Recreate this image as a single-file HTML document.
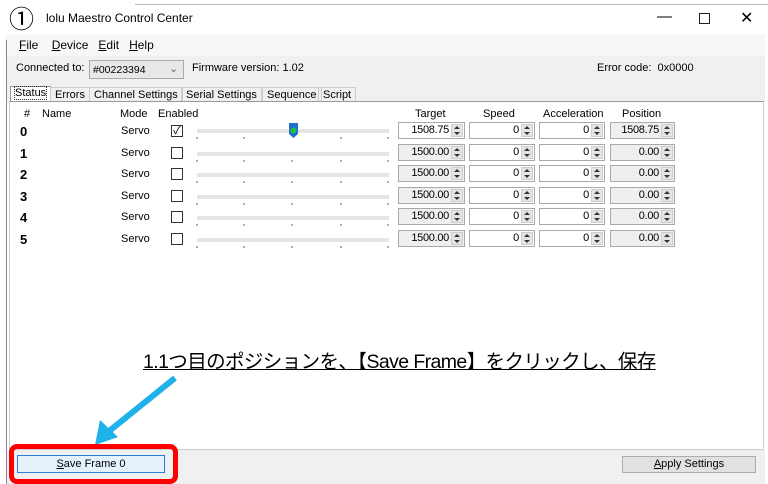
<!DOCTYPE html>
<html><head><meta charset="utf-8"><style>
*{margin:0;padding:0;box-sizing:border-box}
body{width:768px;height:484px;overflow:hidden;background:#fff;font-family:"Liberation Sans","Noto Sans CJK JP",sans-serif;font-size:11px;color:#000;position:relative}
.a{position:absolute;white-space:nowrap}
.sp{position:absolute;height:17px;border:1px solid #a9a9a9;background:#fff;font-size:11px;text-align:right;padding-right:15px;line-height:15px;letter-spacing:-0.3px}
.sp.g{background:#efefef}
.sp i{position:absolute;right:1px;top:1px;width:12px;height:13px;background:#e4e4e4;border:1px solid #cfcfcf}
.sp i:before{content:"";position:absolute;left:2px;top:1px;border:3px solid transparent;border-bottom:3px solid #333;border-top:0}
.sp i:after{content:"";position:absolute;left:2px;top:7px;border:3px solid transparent;border-top:3px solid #333;border-bottom:0}
.tr{position:absolute;left:197px;width:192px;height:4px;background:#e5e5e5}
.cb{position:absolute;left:171px;width:12px;height:12px;border:1px solid #333;background:#fff}
.n{position:absolute;left:20px;font-weight:bold;font-size:13px}
.sv{position:absolute;left:121px}
</style></head><body>
<div class="a" style="left:135px;top:4px;width:633px;height:1px;background:#bbb"></div>
<div class="a" style="left:9px;top:5px;font-size:25px;line-height:30px">①</div>
<div class="a" style="left:46px;top:11px;font-size:12px">lolu Maestro Control Center</div>
<div class="a" style="left:657px;top:8px;font-size:15px">—</div>
<div class="a" style="left:699px;top:13px;width:11px;height:11px;border:1px solid #222"></div>
<div class="a" style="left:740px;top:8px;font-size:16px">✕</div>
<div class="a" style="left:5px;top:34px;width:760px;height:22px;background:#f7f7f7"></div>
<div class="a" style="left:6px;top:40px;width:1px;height:444px;background:#888"></div>
<div class="a" style="left:19px;top:38px;font-size:12px"><u>F</u>ile &nbsp;&nbsp; <u>D</u>evice &nbsp;&nbsp;<u>E</u>dit &nbsp;&nbsp;<u>H</u>elp</div>
<div class="a" style="left:7px;top:56px;width:758px;height:46px;background:#f0f0f0"></div>
<div class="a" style="left:16px;top:62px">Connected to:</div>
<div class="a" style="left:89px;top:60px;width:95px;height:19px;border:1px solid #aaa;background:#e8e8e8;padding:3px 3px;font-size:10.5px">#00223394<span style="position:absolute;right:5px;top:2px;color:#666">⌄</span></div>
<div class="a" style="left:192px;top:62px">Firmware version: 1.02</div>
<div class="a" style="left:597px;top:62px">Error code: &nbsp;0x0000</div>
<div class="a" style="left:10px;top:86px;height:15px;border:1px solid #999;border-bottom:0;background:#fff;padding:0 3px;line-height:13px"><span style="border:1px dotted #333">Status</span></div>
<div class="a" style="left:50px;top:87px;height:14px;border:1px solid #ccc;border-bottom:0;padding:0 4px;line-height:14px">Errors</div>
<div class="a" style="left:89px;top:87px;height:14px;border:1px solid #ccc;border-bottom:0;padding:0 4px;line-height:14px">Channel Settings</div>
<div class="a" style="left:181px;top:87px;height:14px;border:1px solid #ccc;border-bottom:0;padding:0 4px;line-height:14px">Serial Settings</div>
<div class="a" style="left:262px;top:87px;height:14px;border:1px solid #ccc;border-bottom:0;padding:0 4px;line-height:14px">Sequence</div>
<div class="a" style="left:318px;top:87px;height:14px;border:1px solid #ccc;border-bottom:0;padding:0 4px;line-height:14px">Script</div>
<div class="a" style="left:9px;top:101px;width:755px;height:349px;border:1px solid #ccc;border-top-color:#999;background:#fff"></div>
<div class="a" style="left:24px;top:108px">#</div><div class="a" style="left:42px;top:108px">Name</div>
<div class="a" style="left:120px;top:108px">Mode</div><div class="a" style="left:158px;top:108px">Enabled</div>
<div class="a" style="left:415px;top:108px">Target</div><div class="a" style="left:483px;top:108px">Speed</div>
<div class="a" style="left:543px;top:108px">Acceleration</div><div class="a" style="left:622px;top:108px">Position</div>

<div class="n" style="top:124px">0</div><div class="sv a" style="top:125px">Servo</div><div class="cb" style="top:125px;font-size:11px;line-height:10px;text-align:center">✓</div>
<div class="tr" style="top:129px"></div>
<div class="sp" style="left:398px;top:122px;width:67px">1508.75<i></i></div><div class="sp" style="left:469px;top:122px;width:66px">0<i></i></div><div class="sp" style="left:539px;top:122px;width:66px">0<i></i></div><div class="sp g" style="left:610px;top:122px;width:65px">1508.75<i></i></div>
<div class="n" style="top:146px">1</div><div class="sv a" style="top:147px">Servo</div><div class="cb" style="top:147px"></div>
<div class="tr" style="top:152px"></div>
<div class="sp g" style="left:398px;top:144px;width:67px">1500.00<i></i></div><div class="sp" style="left:469px;top:144px;width:66px">0<i></i></div><div class="sp" style="left:539px;top:144px;width:66px">0<i></i></div><div class="sp g" style="left:610px;top:144px;width:65px">0.00<i></i></div>
<div class="n" style="top:167px">2</div><div class="sv a" style="top:168px">Servo</div><div class="cb" style="top:168px"></div>
<div class="tr" style="top:173px"></div>
<div class="sp g" style="left:398px;top:165px;width:67px">1500.00<i></i></div><div class="sp" style="left:469px;top:165px;width:66px">0<i></i></div><div class="sp" style="left:539px;top:165px;width:66px">0<i></i></div><div class="sp g" style="left:610px;top:165px;width:65px">0.00<i></i></div>
<div class="n" style="top:189px">3</div><div class="sv a" style="top:190px">Servo</div><div class="cb" style="top:190px"></div>
<div class="tr" style="top:195px"></div>
<div class="sp g" style="left:398px;top:187px;width:67px">1500.00<i></i></div><div class="sp" style="left:469px;top:187px;width:66px">0<i></i></div><div class="sp" style="left:539px;top:187px;width:66px">0<i></i></div><div class="sp g" style="left:610px;top:187px;width:65px">0.00<i></i></div>
<div class="n" style="top:210px">4</div><div class="sv a" style="top:211px">Servo</div><div class="cb" style="top:211px"></div>
<div class="tr" style="top:216px"></div>
<div class="sp g" style="left:398px;top:208px;width:67px">1500.00<i></i></div><div class="sp" style="left:469px;top:208px;width:66px">0<i></i></div><div class="sp" style="left:539px;top:208px;width:66px">0<i></i></div><div class="sp g" style="left:610px;top:208px;width:65px">0.00<i></i></div>
<div class="n" style="top:232px">5</div><div class="sv a" style="top:233px">Servo</div><div class="cb" style="top:233px"></div>
<div class="tr" style="top:238px"></div>
<div class="sp g" style="left:398px;top:230px;width:67px">1500.00<i></i></div><div class="sp" style="left:469px;top:230px;width:66px">0<i></i></div><div class="sp" style="left:539px;top:230px;width:66px">0<i></i></div><div class="sp g" style="left:610px;top:230px;width:65px">0.00<i></i></div>

<svg class="a" style="left:0;top:0" width="768" height="484">
<g fill="#b0b0b0">
<rect x="196" y="137" width="2" height="2"/><rect x="243" y="137" width="2" height="2"/><rect x="340" y="137" width="2" height="2"/><rect x="387" y="137" width="2" height="2"/>
<rect x="196" y="160" width="2" height="2"/><rect x="243" y="160" width="2" height="2"/><rect x="291" y="160" width="2" height="2"/><rect x="340" y="160" width="2" height="2"/><rect x="387" y="160" width="2" height="2"/>
<rect x="196" y="181" width="2" height="2"/><rect x="243" y="181" width="2" height="2"/><rect x="291" y="181" width="2" height="2"/><rect x="340" y="181" width="2" height="2"/><rect x="387" y="181" width="2" height="2"/>
<rect x="196" y="203" width="2" height="2"/><rect x="243" y="203" width="2" height="2"/><rect x="291" y="203" width="2" height="2"/><rect x="340" y="203" width="2" height="2"/><rect x="387" y="203" width="2" height="2"/>
<rect x="196" y="224" width="2" height="2"/><rect x="243" y="224" width="2" height="2"/><rect x="291" y="224" width="2" height="2"/><rect x="340" y="224" width="2" height="2"/><rect x="387" y="224" width="2" height="2"/>
<rect x="196" y="246" width="2" height="2"/><rect x="243" y="246" width="2" height="2"/><rect x="291" y="246" width="2" height="2"/><rect x="340" y="246" width="2" height="2"/><rect x="387" y="246" width="2" height="2"/>
</g>
<path d="M289 123 h9 v11 l-4.5 4 l-4.5 -4 z" fill="#1f6fd1"/>
<circle cx="293.5" cy="130.5" r="3" fill="#22c03a"/>
<line x1="175" y1="378" x2="108" y2="432" stroke="#1fb1ea" stroke-width="6"/>
<path d="M95 445 L100 420 L118 437 Z" fill="#1fb1ea"/>
</svg>

<div class="a" style="left:143px;top:345px;font-size:19.5px;text-decoration:underline;letter-spacing:-0.6px">1.1つ目のポジションを、【Save Frame】をクリックし、保存</div>

<div class="a" style="left:7px;top:450px;width:758px;height:34px;background:#f0f0f0"></div>
<div class="a" style="left:17px;top:455px;width:148px;height:18px;border:1px solid #2b7fd4;background:#e5f1fb;text-align:center;line-height:16px"><u>S</u>ave Frame 0</div>
<div class="a" style="left:622px;top:456px;width:134px;height:17px;border:1px solid #adadad;background:#e1e1e1;text-align:center;line-height:15px"><u>A</u>pply Settings</div>
<div class="a" style="left:9px;top:444px;width:169px;height:40px;border:5px solid #f00;border-radius:8px"></div>
</body></html>
